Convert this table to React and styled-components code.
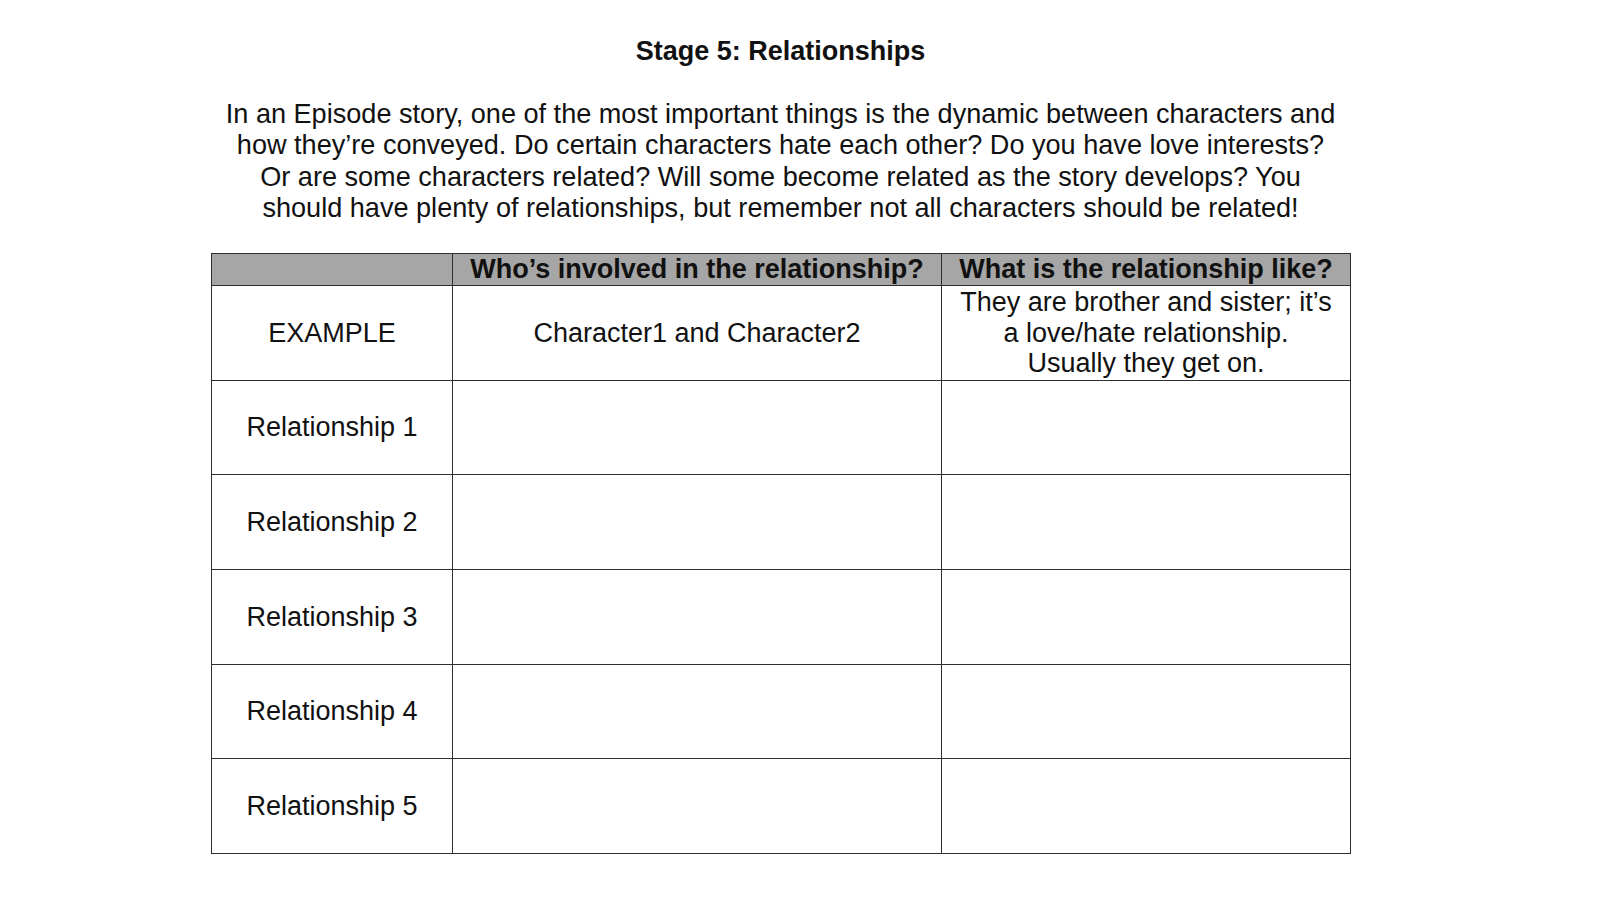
import React from 'react';
import styled, { createGlobalStyle } from 'styled-components';

const GlobalStyle = createGlobalStyle`
  html, body {
    margin: 0;
    padding: 0;
    background: #fff;
  }
  body {
    font-family: "Liberation Sans", Arial, sans-serif;
    color: #111;
  }
`;

const rows = ['Relationship 1', 'Relationship 2', 'Relationship 3', 'Relationship 4', 'Relationship 5'];

function App() {
  return (
    <>
      <GlobalStyle />
      <Page>
        <Sheet>
          <Title>Stage 5: Relationships</Title>
          <Intro>
            In an Episode story, one of the most important things is the dynamic between characters and
            <br />
            how they’re conveyed. Do certain characters hate each other? Do you have love interests?
            <br />
            Or are some characters related? Will some become related as the story develops? You
            <br />
            should have plenty of relationships, but remember not all characters should be related!
          </Intro>
          <Table>
            <colgroup>
              <col style={{ width: 241 }} />
              <col style={{ width: 489 }} />
              <col style={{ width: 409 }} />
            </colgroup>
            <thead>
              <tr>
                <HeadCell />
                <HeadCell>Who’s involved in the relationship?</HeadCell>
                <HeadCell>What is the relationship like?</HeadCell>
              </tr>
            </thead>
            <tbody>
              <tr>
                <Cell>EXAMPLE</Cell>
                <Cell>Character1 and Character2</Cell>
                <Cell>
                  They are brother and sister; it’s
                  <br />
                  a love/hate relationship.
                  <br />
                  Usually they get on.
                </Cell>
              </tr>
              {rows.map((label) => (
                <tr key={label}>
                  <Cell>{label}</Cell>
                  <Cell />
                  <Cell />
                </tr>
              ))}
            </tbody>
          </Table>
        </Sheet>
      </Page>
    </>
  );
}

export default App;

const Page = styled.div`
  width: 1600px;
  height: 900px;
  padding-top: 36px;
  box-sizing: border-box;
`;
const Sheet = styled.div`
  width: 1139px;
  margin-left: 211px;
  text-align: center;
`;
const Title = styled.h1`
  margin: 0;
  font-size: 27px;
  line-height: 31px;
  font-weight: bold;
`;
const Intro = styled.p`
  margin: 31px 0 0;
  font-size: 27.1px;
  line-height: 31.3px;
`;
const Table = styled.table`
  margin-top: 30px;
  width: 1139px;
  border-collapse: collapse;
  table-layout: fixed;
  font-size: 27px;
`;
const HeadCell = styled.th`
  height: 31px;
  padding: 0;
  background: #a6a6a6;
  border: 1px solid #2e2e2e;
  font-weight: bold;
  line-height: 29px;
  white-space: nowrap;
`;
const Cell = styled.td`
  height: 93.6px;
  padding: 0;
  border: 1px solid #2e2e2e;
  font-weight: normal;
  line-height: 30.5px;
  text-align: center;
  vertical-align: middle;
`;
